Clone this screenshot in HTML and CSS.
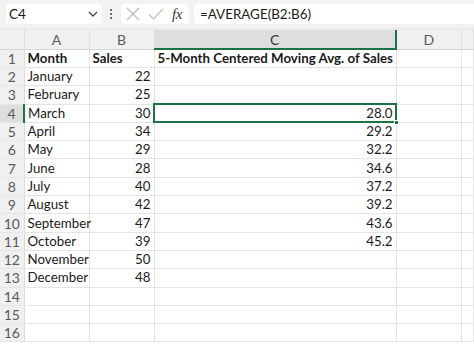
FILE: index.html
```html
<!DOCTYPE html>
<html lang="en">
<head>
    <meta charset="UTF-8">
    <title>Moving Average</title>
    <link rel="stylesheet" href="styles.css">
</head>
<body>
    <div class="formula-bar">
        <div class="name-box">
            <span>C4</span>
            <svg class="chevron" width="10" height="6" viewBox="0 0 10 6"><path d="M1 1 L5 5 L9 1" fill="none" stroke="#444" stroke-width="1.3"/></svg>
        </div>
        <div class="grip"><span></span><span></span><span></span></div>
        <div class="fx-box">
            <svg width="14" height="14" viewBox="0 0 14 14"><path d="M1 1 L13 13 M13 1 L1 13" stroke="#bdbdbd" stroke-width="1.2"/></svg>
            <svg width="16" height="14" viewBox="0 0 16 14"><path d="M1 7.5 L5.5 12 L15 2" fill="none" stroke="#bdbdbd" stroke-width="1.2"/></svg>
            <span class="fx">fx</span>
        </div>
        <div class="formula">=AVERAGE(B2:B6)</div>
    </div>

    <table class="sheet">
        <colgroup>
            <col class="c-row"><col class="c-a"><col class="c-b"><col class="c-c"><col class="c-d"><col>
        </colgroup>
        <tr class="col-head">
            <th class="corner"></th><th>A</th><th>B</th><th class="active">C</th><th>D</th><th></th>
        </tr>
        <tr><th>1</th><td class="bold">Month</td><td class="bold">Sales</td><td class="bold">5-Month Centered Moving Avg. of Sales</td><td></td><td></td></tr>
        <tr><th>2</th><td>January</td><td class="num">22</td><td></td><td></td><td></td></tr>
        <tr><th>3</th><td>February</td><td class="num">25</td><td></td><td></td><td></td></tr>
        <tr><th class="active">4</th><td>March</td><td class="num">30</td><td class="num selected">28.0<i class="handle"></i></td><td></td><td></td></tr>
        <tr><th>5</th><td>April</td><td class="num">34</td><td class="num">29.2</td><td></td><td></td></tr>
        <tr><th>6</th><td>May</td><td class="num">29</td><td class="num">32.2</td><td></td><td></td></tr>
        <tr><th>7</th><td>June</td><td class="num">28</td><td class="num">34.6</td><td></td><td></td></tr>
        <tr><th>8</th><td>July</td><td class="num">40</td><td class="num">37.2</td><td></td><td></td></tr>
        <tr><th>9</th><td>August</td><td class="num">42</td><td class="num">39.2</td><td></td><td></td></tr>
        <tr><th>10</th><td>September</td><td class="num">47</td><td class="num">43.6</td><td></td><td></td></tr>
        <tr><th>11</th><td>October</td><td class="num">39</td><td class="num">45.2</td><td></td><td></td></tr>
        <tr><th>12</th><td>November</td><td class="num">50</td><td></td><td></td><td></td></tr>
        <tr><th>13</th><td>December</td><td class="num">48</td><td></td><td></td><td></td></tr>
        <tr><th>14</th><td></td><td></td><td></td><td></td><td></td></tr>
        <tr><th>15</th><td></td><td></td><td></td><td></td><td></td></tr>
        <tr><th>16</th><td></td><td></td><td></td><td></td><td></td></tr>
    </table>
</body>
</html>
```

FILE: styles.css
```css
body {
    margin: 0;
    width: 474px;
    height: 347px;
    overflow: hidden;
    background: #ffffff;
    font-family: Lato, "Open Sans", sans-serif;
    color: #1b1b1b;
}

.formula-bar {
    display: flex;
    align-items: center;
    height: 28px;
    padding: 0 0 0 6px;
    background-color: #f3f1f1;
    border-bottom: 2px solid #ebeaea;
}

.name-box {
    display: flex;
    align-items: center;
    justify-content: space-between;
    width: 96px;
    height: 20px;
    padding: 0 3px 0 3px;
    box-sizing: border-box;
    background-color: #ffffff;
    border-radius: 4px;
    font-size: 13.5px;
}

.chevron {
    margin-right: 1px;
}

.grip {
    display: flex;
    flex-direction: column;
    gap: 2px;
    margin: 0 9px 0 8px;
}

.grip span {
    width: 2px;
    height: 2px;
    background-color: #444;
    border-radius: 1px;
}

.fx-box {
    display: flex;
    align-items: center;
    gap: 8px;
    width: 68px;
    height: 20px;
    padding-left: 5px;
    box-sizing: border-box;
    background-color: #ffffff;
    border-radius: 4px;
}

.fx {
    font-family: "Liberation Serif", serif;
    font-style: italic;
    font-size: 15px;
    color: #333;
    letter-spacing: -0.5px;
}

.formula {
    flex: 1;
    height: 20px;
    margin-left: 5px;
    padding-left: 6px;
    line-height: 20px;
    background-color: #ffffff;
    border-radius: 4px 0 0 4px;
    font-size: 13.4px;
}

.sheet {
    border-collapse: collapse;
    table-layout: fixed;
    width: 474px;
    font-size: 13.3px;
}

.c-row { width: 24px; }
.c-a { width: 65px; }
.c-b { width: 65px; }
.c-c { width: 242px; }
.c-d { width: 65px; }

.sheet tr {
    height: 18.3px;
}

.sheet th {
    padding: 0;
    font-weight: normal;
    color: #5a5a5a;
    background-color: #f0f0f0;
    border-bottom: 1px solid #e6e6e6;
    text-align: center;
    font-size: 14px;
}

.sheet tr > th:first-child {
    border-right: 1px solid #dcdcdc;
}

.col-head th {
    height: 18px;
    border-right: 1px solid #e0e0e0;
    border-bottom: 1px solid #d6d6d6;
}

.col-head th.active {
    background-color: #d9d9d9;
    color: #333;
    border-bottom: 2px solid #1e7145;
}

.sheet tr > th.active {
    background-color: #dedede;
    border-right: 2px solid #1e7145;
}

.sheet td {
    padding: 0 3px;
    white-space: nowrap;
    overflow: visible;
    border-right: 1px solid #e4e4e4;
    border-bottom: 1px solid #e4e4e4;
    line-height: 17px;
}

.sheet td.bold {
    font-weight: bold;
}

.sheet td.num {
    text-align: right;
}

.sheet td.selected {
    position: relative;
    outline: 2px solid #1e7145;
    outline-offset: -1px;
}

.handle {
    position: absolute;
    right: -3px;
    bottom: -3px;
    width: 5px;
    height: 5px;
    background-color: #1e7145;
    border: 1px solid #ffffff;
    box-sizing: border-box;
}
```
